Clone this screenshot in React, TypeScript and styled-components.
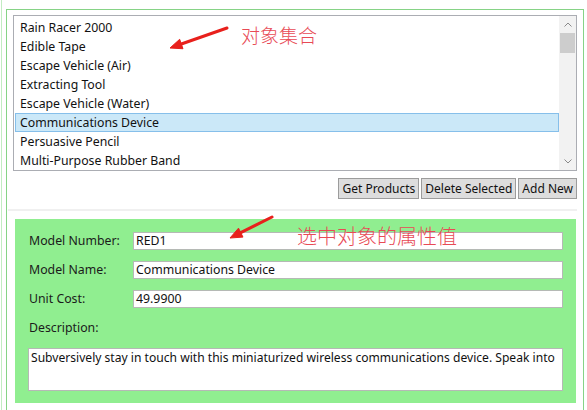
import styled, { createGlobalStyle } from 'styled-components';

// --------------- Data ---------------
const products = [
  'Rain Racer 2000',
  'Edible Tape',
  'Escape Vehicle (Air)',
  'Extracting Tool',
  'Escape Vehicle (Water)',
  'Communications Device',
  'Persuasive Pencil',
  'Multi-Purpose Rubber Band',
];
const selectedIndex = 5;

const fields = [
  { label: 'Model Number:', value: 'RED1' },
  { label: 'Model Name:', value: 'Communications Device' },
  { label: 'Unit Cost:', value: '49.9900' },
];

const description =
  'Subversively stay in touch with this miniaturized wireless communications device. Speak into';

// --------------- Function ---------------
type Point = [number, number];

function Arrow({ from, to }: { from: Point; to: Point }): JSX.Element {
  const dx = to[0] - from[0];
  const dy = to[1] - from[1];
  const len = Math.hypot(dx, dy);
  const ux = dx / len;
  const uy = dy / len;
  const bx = to[0] - ux * 12;
  const by = to[1] - uy * 12;
  const nx = -uy * 5;
  const ny = ux * 5;
  const head = `${to[0]},${to[1]} ${bx + nx},${by + ny} ${bx - nx},${by - ny}`;
  return (
    <g fill='#e8201c' stroke='#e8201c'>
      <line x1={from[0]} y1={from[1]} x2={bx} y2={by} strokeWidth={3} strokeLinecap='round' />
      <polygon points={head} strokeWidth={1} />
    </g>
  );
}

function Chevron({ up }: { up?: boolean }): JSX.Element {
  return (
    <svg width='8' height='5' viewBox='0 0 8 5'>
      <path
        d={up ? 'M0.5 4.5 L4 1 L7.5 4.5' : 'M0.5 0.5 L4 4 L7.5 0.5'}
        fill='none'
        stroke='#8a8a8a'
        strokeWidth='1'
      />
    </svg>
  );
}

export default function App(): JSX.Element {
  return (
    <>
      <GlobalStyle />
      <Page>
        <OuterFrame>
          <Window>
            <ListBox>
              <Items>
                {products.map((name, i) => (
                  <Item key={name} selected={i === selectedIndex}>
                    {name}
                  </Item>
                ))}
              </Items>
              <ScrollBar>
                <ScrollArrow>
                  <Chevron up />
                </ScrollArrow>
                <Thumb />
                <ScrollTrack />
                <ScrollArrow>
                  <Chevron />
                </ScrollArrow>
              </ScrollBar>
            </ListBox>

            <ButtonRow>
              <Button>Get Products</Button>
              <Button>Delete Selected</Button>
              <Button>Add New</Button>
            </ButtonRow>

            <Splitter />

            <DetailPanel>
              {fields.map((f) => (
                <Field key={f.label}>
                  <Label>{f.label}</Label>
                  <TextBox>{f.value}</TextBox>
                </Field>
              ))}
              <DescLabel>Description:</DescLabel>
              <DescBox>{description}</DescBox>
            </DetailPanel>
          </Window>
        </OuterFrame>

        <Note style={{ left: 241, top: 25 }} size={19}>
          对象集合
        </Note>
        <Note style={{ left: 297, top: 225 }} size={20}>
          选中对象的属性值
        </Note>
        <Overlay width='587' height='410'>
          <Arrow from={[227, 28]} to={[170, 48]} />
          <Arrow from={[272, 217]} to={[230, 238]} />
        </Overlay>
      </Page>
    </>
  );
}

// --------------- Style ---------------
const GlobalStyle = createGlobalStyle`
  html, body {
    margin: 0;
    padding: 0;
    background: #ffffff;
  }
  body {
    font-family: 'Noto Sans', 'Open Sans', sans-serif;
    font-size: 12.3px;
    color: #111;
  }
  * {
    box-sizing: border-box;
  }
`;
const Page = styled.div`
  position: relative;
  width: 587px;
  height: 410px;
  overflow: hidden;
  padding-left: 1px;
`;
const OuterFrame = styled.div`
  height: 100%;
  border-left: 1px solid #c2ecc2;
  padding: 9px 0 0 4px;
`;
const Window = styled.div`
  width: 578px;
  height: 410px;
  border: 1px solid #86d386;
  border-bottom: none;
  padding: 5px 6px 0 6px;
`;
const ListBox = styled.div`
  display: flex;
  height: 156px;
  border: 1px solid #abadb3;
  background: #fff;
`;
const Items = styled.ul`
  flex: 1;
  margin: 0;
  padding: 2px 0 0 1px;
  list-style: none;
  overflow: hidden;
`;
const Item = styled.li<{ selected?: boolean }>`
  height: 19px;
  line-height: 17px;
  padding: 0 4px;
  white-space: nowrap;
  border: 1px solid ${({ selected }) => (selected ? '#86bfea' : 'transparent')};
  background: ${({ selected }) => (selected ? '#cbe8f8' : 'transparent')};
`;
const ScrollBar = styled.div`
  width: 17px;
  display: flex;
  flex-direction: column;
  background: #f2f2f2;
`;
const ScrollArrow = styled.div`
  height: 17px;
  display: flex;
  align-items: center;
  justify-content: center;
`;
const Thumb = styled.div`
  height: 20px;
  margin: 0 1px;
  background: #cdcdcd;
`;
const ScrollTrack = styled.div`
  flex: 1;
`;
const ButtonRow = styled.div`
  display: flex;
  justify-content: flex-end;
  gap: 2px;
  margin-top: 7px;
`;
const Button = styled.button`
  height: 21px;
  padding: 0 3px;
  font: inherit;
  font-size: 12px;
  color: #111;
  background: #dddddd;
  border: 1px solid #9c9c9c;
  border-radius: 0;
`;
const Splitter = styled.div`
  height: 2px;
  margin: 10px 0 0 -5px;
  background: #f0f0f0;
`;
const DetailPanel = styled.div`
  margin: 8px 1px 0 2px;
  padding: 13px 13px 12px 14px;
  background: #90ee90;
  display: grid;
  grid-template-columns: 104px 1fr;
  row-gap: 11px;
`;
const Field = styled.div`
  display: contents;
`;
const Label = styled.div`
  height: 18px;
  line-height: 18px;
  color: #1b1b1b;
`;
const TextBox = styled.div`
  height: 18px;
  line-height: 16px;
  padding: 0 2px;
  background: #fff;
  border: 1px solid #b5b9b5;
  white-space: nowrap;
  overflow: hidden;
`;
const DescLabel = styled(Label)`
  grid-column: 1 / 3;
`;
const DescBox = styled(TextBox)`
  grid-column: 1 / 3;
  margin-left: -1px;
  height: 43px;
  line-height: 18px;
  font-size: 12.1px;
`;
const Note = styled.div<{ size: number }>`
  position: absolute;
  font-family: 'Noto Sans CJK SC', sans-serif;
  font-weight: 300;
  font-size: ${({ size }) => size}px;
  line-height: 1.1;
  color: #e84a55;
  white-space: nowrap;
`;
const Overlay = styled.svg`
  position: absolute;
  left: 0;
  top: 0;
  pointer-events: none;
`;
